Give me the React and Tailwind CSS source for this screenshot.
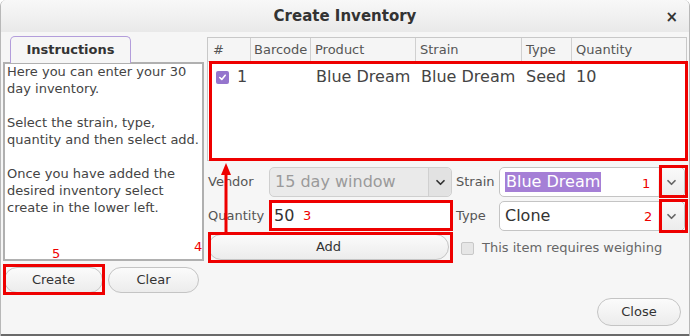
import React from "react";

const Chevron = ({ color = "#555" }) => (
  <svg width="11" height="7" viewBox="0 0 12 8">
    <polyline points="2,2 6,6 10,2" fill="none" stroke={color} strokeWidth="2" strokeLinecap="round" strokeLinejoin="round" />
  </svg>
);

export default function App() {
  return (
    <div
      className="relative w-[690px] h-[336px] overflow-hidden bg-[#f6f6f6] text-[#444] rounded-t-[6px] border-x border-[#b8b8b8]"
      style={{ fontFamily: '"DejaVu Sans", sans-serif' }}
    >
      {/* Title bar */}
      <div className="relative h-[32px] flex items-center justify-center bg-gradient-to-b from-[#f8f8f8] to-[#e9e9e9]">
        <span className="text-[15px] font-bold text-[#333]">Create Inventory</span>
        <span className="absolute right-[11px] top-[6px] text-[15px] font-bold text-[#333]">×</span>
      </div>

      <div className="flex">
        {/* Left column */}
        <div className="w-[206px] pl-[2px] pt-[4px] flex flex-col">
          <div className="relative h-[26px]">
            <div className="absolute left-[7px] top-0 w-[121px] h-[27px] bg-[#f6f6f6] border border-b-0 border-[#b39ddb] rounded-t-[5px] flex items-center justify-center z-10">
              <span className="text-[13px] font-bold text-[#333]">Instructions</span>
            </div>
          </div>
          <div className="w-[201px] h-[199px] border-2 border-[#b0b0b0] bg-white px-[2px] text-[13px] leading-[17px] text-[#444]">
            <p className="-mt-[1px]">Here you can enter your 30<br />day inventory.</p>
            <p className="mt-[17px]">Select the strain, type,<br />quantity and then select add.</p>
            <p className="mt-[17px]">Once you have added the<br />desired inventory select<br />create in the lower left.</p>
          </div>
          <div className="flex gap-[5px] mt-[6px] ml-[1px]">
            <button className="w-[99px] h-[26px] rounded-full border border-[#c4c4c4] bg-gradient-to-b from-[#fbfbfb] to-[#ececec] text-[13px] text-[#333]">Create</button>
            <button className="w-[91px] h-[26px] rounded-full border border-[#c4c4c4] bg-gradient-to-b from-[#fbfbfb] to-[#ececec] text-[13px] text-[#333]">Clear</button>
          </div>
        </div>

        {/* Right column */}
        <div className="w-[480px] pt-[5px] flex flex-col">
          {/* Table */}
          <div className="h-[124px] border border-[#c8c8c8] bg-white">
            <div className="flex h-[24px] bg-[#f5f5f5] border-b border-[#d0d0d0] text-[13px] text-[#555]">
              <div className="w-[43px] pl-[5px] flex items-center border-r border-[#d0d0d0]">#</div>
              <div className="w-[60px] pl-[3px] flex items-center border-r border-[#d0d0d0]">Barcode</div>
              <div className="w-[105px] pl-[4px] flex items-center border-r border-[#d0d0d0]">Product</div>
              <div className="w-[106px] pl-[4px] flex items-center border-r border-[#d0d0d0]">Strain</div>
              <div className="w-[50px] pl-[4px] flex items-center border-r border-[#d0d0d0]">Type</div>
              <div className="flex-1 pl-[4px] flex items-center">Quantity</div>
            </div>
            <div className="flex h-[26px] mt-[2px] items-center text-[16px] text-[#444]">
              <div className="w-[43px] pl-[8px] flex items-center gap-[8px]">
                <span className="w-[13px] h-[13px] rounded-[2px] bg-[#9575cd] flex items-center justify-center">
                  <svg width="9" height="9" viewBox="0 0 10 10">
                    <polyline points="2,5 4.2,7.2 8,2.5" fill="none" stroke="white" strokeWidth="1.8" strokeLinecap="round" strokeLinejoin="round" />
                  </svg>
                </span>
                <span>1</span>
              </div>
              <div className="w-[60px]"></div>
              <div className="w-[105px] pl-[5px]">Blue Dream</div>
              <div className="w-[106px] pl-[5px]">Blue Dream</div>
              <div className="w-[50px] pl-[4px]">Seed</div>
              <div className="flex-1 pl-[4px]">10</div>
            </div>
          </div>

          {/* Form */}
          <div className="mt-[6px] flex flex-col text-[13px]">
            <div className="flex items-center h-[30px]">
              <span className="w-[62px] pl-[1px] text-[#555]">Vendor</span>
              <div className="w-[183px] h-[30px] flex rounded-[5px] border border-[#cfcfcf] bg-[#eaeaea]">
                <span className="flex-1 pl-[5px] flex items-center text-[16px] text-[#9a9a9a]">15 day window</span>
                <span className="w-[23px] flex items-center justify-center border-l border-[#d0d0d0] rounded-r-[5px] bg-[#e2e2e2]"><Chevron color="#333" /></span>
              </div>
              <span className="w-[47px] pl-[4px] text-[#555]">Strain</span>
              <div className="w-[186px] h-[30px] flex rounded-[5px] border border-[#c4c4c4] bg-white">
                <span className="flex-1 pl-[5px] flex items-center">
                  <span className="bg-[#a57fd6] text-white text-[16px] leading-[20px] px-[1px]">Blue Dream</span>
                </span>
                <span className="w-[26px] flex items-center justify-center rounded-r-[5px] bg-gradient-to-b from-[#fafafa] to-[#ececec]"><Chevron color="#666" /></span>
              </div>
            </div>
            <div className="flex items-center h-[30px] mt-[4px]">
              <span className="w-[62px] pl-[1px] text-[#555]">Quantity</span>
              <div className="w-[181px] h-[28px] bg-white flex items-center pl-[5px] text-[16px] text-[#333]">50</div>
              <span className="w-[49px] pl-[6px] text-[#555]">Type</span>
              <div className="w-[186px] h-[30px] flex rounded-[5px] border border-[#c4c4c4] bg-white">
                <span className="flex-1 pl-[5px] flex items-center text-[16px] text-[#333]">Clone</span>
                <span className="w-[26px] flex items-center justify-center rounded-r-[5px] bg-gradient-to-b from-[#fafafa] to-[#ececec]"><Chevron color="#666" /></span>
              </div>
            </div>
            <div className="flex items-center h-[26px] mt-[3px]">
              <button className="w-[241px] h-[26px] ml-[1px] rounded-full border border-[#c4c4c4] bg-gradient-to-b from-[#fbfbfb] to-[#ececec] text-[13px] text-[#333]">Add</button>
              <span className="ml-[12px] mt-[2px] w-[13px] h-[13px] border border-[#c8c8c8] bg-[#e6e6e6] rounded-[2px]"></span>
              <span className="ml-[8px] mt-[2px] text-[#666]">This item requires weighing</span>
            </div>
          </div>

          <div className="flex justify-end mt-[38px] pr-[6px]">
            <button className="w-[84px] h-[28px] rounded-full border border-[#c4c4c4] bg-gradient-to-b from-[#fbfbfb] to-[#ececec] text-[13px] text-[#333]">Close</button>
          </div>
        </div>
      </div>

      {/* bottom border */}
      <div className="absolute left-0 right-0 bottom-0 h-[2px] bg-[#6a6a6a]"></div>

      {/* Red annotations */}
      <div className="absolute left-[2px] top-[264px] w-[102px] h-[31px] border-[3px] border-[#ee0000] pointer-events-none"></div>
      <span className="absolute left-[51px] top-[244px] text-[13px] text-[#ee0000]">5</span>
      <div className="absolute left-[208px] top-[61px] w-[479px] h-[100px] border-[3px] border-[#ee0000]"></div>
      <div className="absolute left-[268px] top-[200px] w-[184px] h-[31px] border-[3px] border-[#ee0000]"></div>
      <span className="absolute left-[302px] top-[206px] text-[13px] text-[#ee0000]">3</span>
      <div className="absolute left-[207px] top-[232px] w-[245px] h-[31px] border-[3px] border-[#ee0000]"></div>
      <span className="absolute left-[193px] top-[237px] text-[13px] text-[#ee0000]">4</span>
      <div className="absolute left-[658px] top-[165px] w-[29px] h-[33px] border-[3px] border-[#ee0000]"></div>
      <span className="absolute left-[641px] top-[174px] text-[13px] text-[#ee0000]">1</span>
      <div className="absolute left-[658px] top-[199px] w-[29px] h-[34px] border-[3px] border-[#ee0000]"></div>
      <span className="absolute left-[643px] top-[207px] text-[13px] text-[#ee0000]">2</span>
      <svg className="absolute left-[217px] top-[162px]" width="16" height="74" viewBox="0 0 16 74">
        <line x1="8" y1="72" x2="8" y2="10" stroke="#ee0000" strokeWidth="3" />
        <polygon points="8,1 3,13 13,13" fill="#ee0000" />
      </svg>
    </div>
  );
}
